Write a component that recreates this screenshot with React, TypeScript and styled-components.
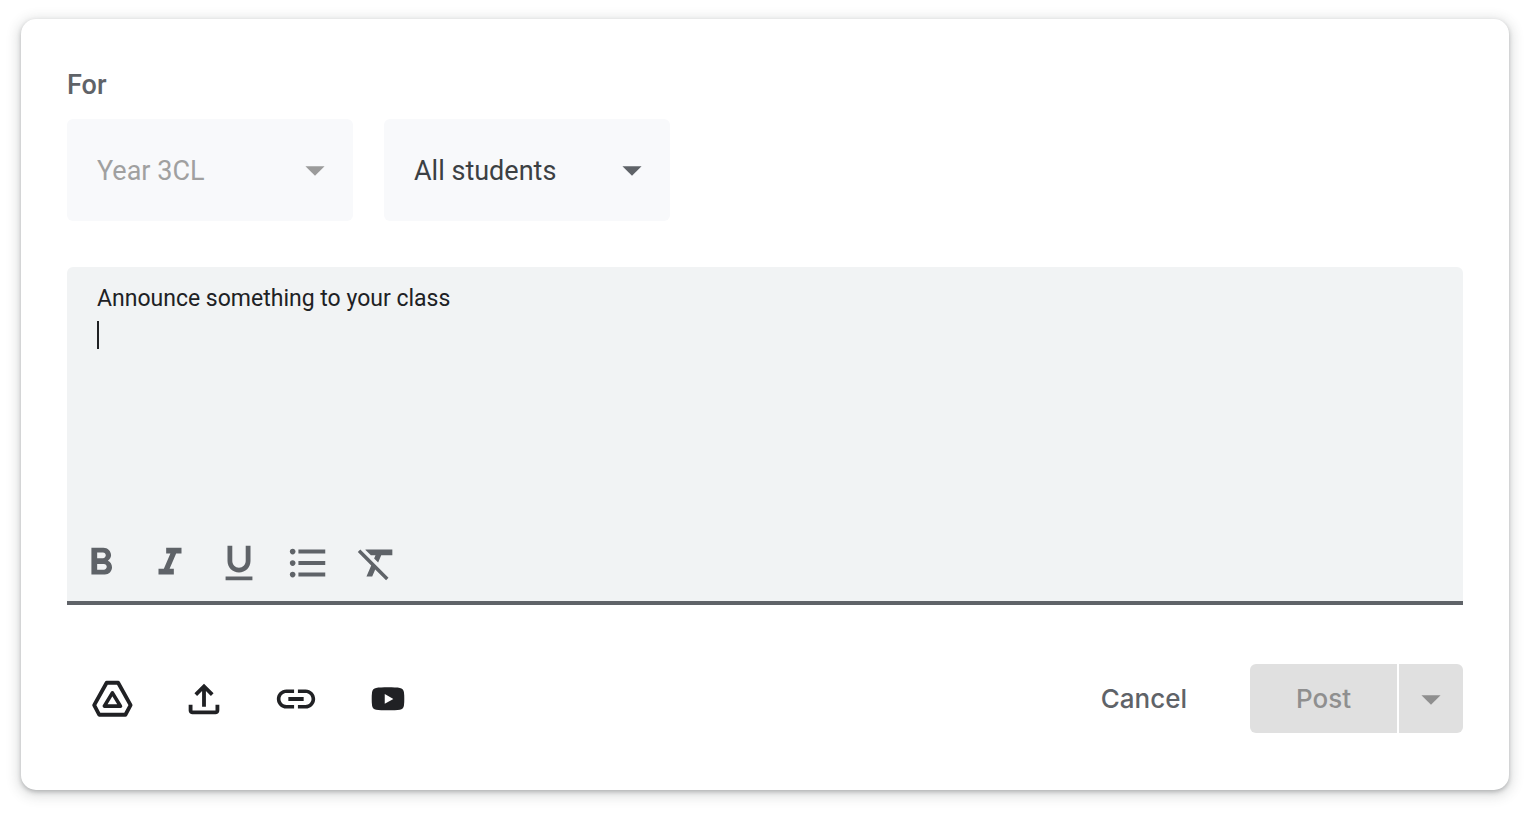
import React from "react";
import styled, { createGlobalStyle, css } from "styled-components";

const GlobalStyle = createGlobalStyle`
  *, *::before, *::after { box-sizing: border-box; }
  body {
    margin: 0;
    background: #fff;
    font-family: Roboto, "Liberation Sans", sans-serif;
    color: #202124;
  }
`;

const Page = styled.main`
  padding: 19px 27px 28px 21px;
`;

const Card = styled.form`
  padding: 48px 46px 57px;
  border-radius: 15px;
  background: #fff;
  box-shadow: 0 2px 4px rgba(60, 64, 67, 0.3), 0 3px 12px 4px rgba(60, 64, 67, 0.15);
`;

const Audience = styled.fieldset`
  margin: 0;
  padding: 0;
  border: 0;
`;

const AudienceTitle = styled.legend`
  padding: 0;
  margin-bottom: 16px;
  font-size: 27px;
  line-height: 36px;
  font-weight: 500;
  color: #5f6368;
`;

const AudienceRow = styled.div`
  display: flex;
  flex-wrap: wrap;
  gap: 31px;
`;

const SelectBox = styled.div<{ $muted?: boolean }>`
  position: relative;
  width: 286px;
  color: ${(p) => (p.$muted ? "#9b9b9b" : "#5f6368")};

  svg {
    position: absolute;
    top: 28px;
    right: 15px;
    pointer-events: none;
  }
`;

const Select = styled.select`
  appearance: none;
  display: block;
  width: 100%;
  height: 102px;
  padding: 2px 64px 0 30px;
  border: 0;
  border-radius: 6px;
  background: #f8f9fb;
  font: 400 27px/36px Roboto, "Liberation Sans", sans-serif;
  color: #3c4043;
  outline: none;

  &:disabled {
    opacity: 1;
    color: #a0a0a0;
  }
`;

const Editor = styled.div`
  display: flex;
  flex-direction: column;
  margin-top: 46px;
  padding: 16px 0 15px;
  border-bottom: 4px solid #5f6368;
  border-radius: 6px 6px 0 0;
  background: #f1f3f4;
`;

const EditorLabel = styled.label`
  padding: 0 30px;
  font-size: 23px;
  line-height: 31px;
`;

const Writing = styled.div`
  position: relative;
  display: flex;
`;

const TextArea = styled.textarea`
  flex: 1;
  height: 226px;
  padding: 3px 30px;
  border: 0;
  outline: none;
  resize: none;
  background: transparent;
  caret-color: transparent;
  font: 400 27px/36px Roboto, "Liberation Sans", sans-serif;
  color: #202124;
`;

const Caret = styled.span`
  position: absolute;
  top: 7px;
  left: 30px;
  width: 2px;
  height: 28px;
  background: #202124;
`;

const Toolbar = styled.div`
  display: flex;
  gap: 23px;
  padding: 0 11px;
`;

const IconButton = styled.button`
  display: flex;
  padding: 0;
  border: 0;
  background: none;
  color: inherit;
`;

const Formatting = styled(Toolbar)`
  color: #5f6368;
`;

const Attachments = styled(Toolbar)`
  gap: 46px;
  padding: 0 22px;
`;

const Footer = styled.footer`
  display: flex;
  align-items: center;
  justify-content: space-between;
  margin-top: 59px;
`;

const Actions = styled.div`
  display: flex;
  align-items: center;
`;

const buttonText = css`
  font: 500 26px/36px Inter, Roboto, sans-serif;
`;

const CancelButton = styled.button`
  ${buttonText}
  margin-right: 33px;
  padding: 16px 30px;
  border: 0;
  background: none;
  color: #5f6368;
`;

const SplitButton = styled.div`
  display: flex;
  gap: 2px;
  height: 69px;
  border-radius: 6px;
  overflow: hidden;
`;

const SplitPart = styled.button<{ $width: number }>`
  ${buttonText}
  display: flex;
  align-items: center;
  justify-content: center;
  width: ${(p) => p.$width}px;
  padding: 0;
  border: 0;
  background: #e0e0e0;
  color: #8f8f8f;
`;

const Icon = ({ children }: { children: React.ReactNode }) => (
  <svg width="46" height="46" viewBox="0 0 24 24" fill="currentColor" aria-hidden="true">
    {children}
  </svg>
);

const ArrowIcon = () => (
  <Icon>
    <path d="M7 10l5 5 5-5z" />
  </Icon>
);

const formats = [
  {
    name: "Bold",
    path: "M15.6 10.79c.97-.67 1.65-1.77 1.65-2.79 0-2.26-1.75-4-4-4H7v14h7.04c2.09 0 3.71-1.7 3.71-3.79 0-1.52-.86-2.82-2.15-3.42zM10 6.5h3c.83 0 1.5.67 1.5 1.5s-.67 1.5-1.5 1.5h-3v-3zm3.5 9H10v-3h3.5c.83 0 1.5.67 1.5 1.5s-.67 1.5-1.5 1.5z",
  },
  { name: "Italic", path: "M10 4v3h2.21l-3.42 8H6v3h8v-3h-2.21l3.42-8H18V4z" },
  {
    name: "Underline",
    path: "M12 17c3.31 0 6-2.69 6-6V3h-2.5v8c0 1.93-1.57 3.5-3.5 3.5S8.5 12.93 8.5 11V3H6v8c0 3.31 2.69 6 6 6zm-7 2v2h14v-2H5z",
  },
  {
    name: "Bulleted list",
    path: "M4 10.5c-.83 0-1.5.67-1.5 1.5s.67 1.5 1.5 1.5 1.5-.67 1.5-1.5-.67-1.5-1.5-1.5zm0-6c-.83 0-1.5.67-1.5 1.5S3.17 7.5 4 7.5 5.5 6.83 5.5 6 4.83 4.5 4 4.5zm0 12c-.83 0-1.5.68-1.5 1.5s.68 1.5 1.5 1.5 1.5-.68 1.5-1.5-.67-1.5-1.5-1.5zM7 19h14v-2H7v2zm0-6h14v-2H7v2zm0-8v2h14V5H7z",
  },
  {
    name: "Remove formatting",
    path: "M3.27 5L2 6.27l6.97 6.97L6.5 19h3l1.57-3.66L16.73 21 18 19.73 3.55 5.27 3.27 5zM6 5v.18L8.82 8h2.4l-.72 1.68 2.1 2.1L14.21 8H20V5H6z",
  },
];

const attachments = [
  {
    name: "Google Drive",
    drawing: (
      <g fill="none" stroke="currentColor" strokeLinejoin="round">
        <path strokeWidth="2" d="M9.2 3.5h6l6.5 11.7-2.7 5H5.3l-2.6-5z" />
        <path strokeWidth="1.9" d="M12.200 8.800l4.200 6.900H8z" />
      </g>
    ),
  },
  {
    name: "Upload",
    drawing: (
      <path d="M11 16V7.85l-2.6 2.6L7 9l5-5 5 5-1.4 1.45-2.6-2.6V16h-2zM6 20q-.825 0-1.413-.587Q4 18.825 4 18v-3h2v3h12v-3h2v3q0 .825-.587 1.413Q18.825 20 18 20H6z" />
    ),
  },
  {
    name: "Link",
    drawing: (
      <path d="M3.9 12c0-1.71 1.39-3.1 3.1-3.1h4V7H7c-2.76 0-5 2.24-5 5s2.24 5 5 5h4v-1.9H7c-1.71 0-3.1-1.39-3.1-3.1zM8 13h8v-2H8v2zm9-6h-4v1.9h4c1.71 0 3.1 1.39 3.1 3.1s-1.39 3.1-3.1 3.1h-4V17h4c2.76 0 5-2.24 5-5s-2.24-5-5-5z" />
    ),
  },
  {
    name: "YouTube",
    drawing: (
      <path
        fillRule="evenodd"
        d="M12 5.9c2.5 0 4.9.1 6.2.3 1.2.2 1.9 1 2.1 2.1.2 1.3.2 2.4.2 3.6s0 2.3-.2 3.6c-.2 1.2-.9 1.9-2.1 2.1-1.3.2-3.7.3-6.2.3s-4.9-.1-6.2-.3c-1.2-.2-1.900-.9-2.1-2.1-.2-1.3-.2-2.4-.2-3.6s0-2.3.2-3.6c.2-1.1.9-1.9 2.1-2.1 1.3-.2 3.7-.3 6.2-.3zM10.300 9.400v5.100l4.500-2.550z"
      />
    ),
  },
];

export default function App() {
  return (
    <Page>
      <GlobalStyle />
      <Card onSubmit={(e) => e.preventDefault()}>
        <Audience>
          <AudienceTitle>For</AudienceTitle>
          <AudienceRow>
            <SelectBox $muted>
              <Select aria-label="Class" disabled>
                <option>Year 3CL</option>
              </Select>
              <ArrowIcon />
            </SelectBox>
            <SelectBox>
              <Select aria-label="Students">
                <option>All students</option>
              </Select>
              <ArrowIcon />
            </SelectBox>
          </AudienceRow>
        </Audience>

        <Editor>
          <EditorLabel htmlFor="announcement">Announce something to your class</EditorLabel>
          <Writing>
            <TextArea id="announcement" />
            <Caret />
          </Writing>
          <Formatting role="toolbar" aria-label="Formatting">
            {formats.map((f) => (
              <IconButton key={f.name} type="button" aria-label={f.name}>
                <Icon>
                  <path d={f.path} />
                </Icon>
              </IconButton>
            ))}
          </Formatting>
        </Editor>

        <Footer>
          <Attachments role="toolbar" aria-label="Attach">
            {attachments.map((a) => (
              <IconButton key={a.name} type="button" aria-label={a.name}>
                <Icon>{a.drawing}</Icon>
              </IconButton>
            ))}
          </Attachments>
          <Actions>
            <CancelButton type="button">Cancel</CancelButton>
            <SplitButton>
              <SplitPart type="submit" disabled $width={147}>
                Post
              </SplitPart>
              <SplitPart type="button" disabled $width={64} aria-label="More post options">
                <ArrowIcon />
              </SplitPart>
            </SplitButton>
          </Actions>
        </Footer>
      </Card>
    </Page>
  );
}
